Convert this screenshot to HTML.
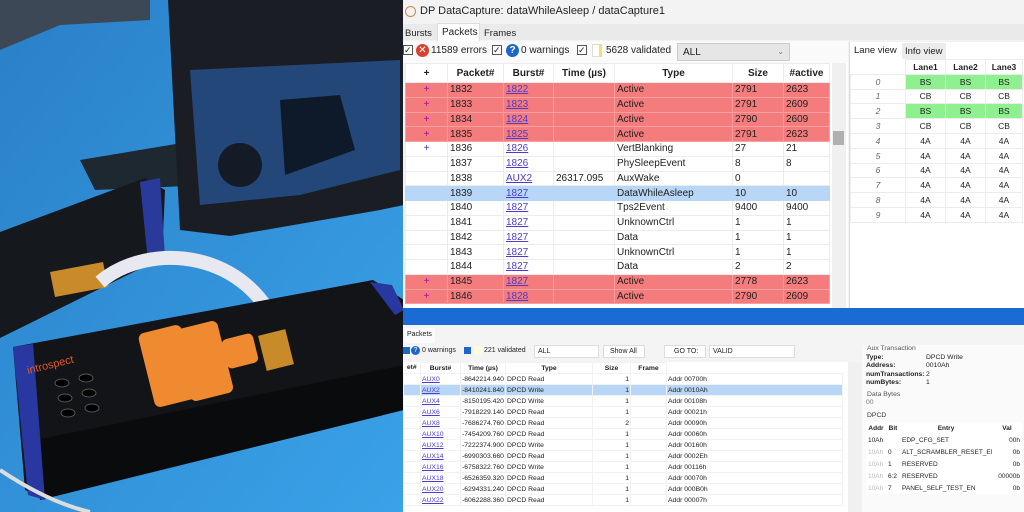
<!DOCTYPE html>
<html><head><meta charset="utf-8"><style>
*{margin:0;padding:0;box-sizing:border-box;white-space:nowrap}
body{width:1024px;height:512px;overflow:hidden;position:relative;background:#fff;font-family:"Liberation Sans",sans-serif;color:#222}
.a{position:absolute}
table{border-collapse:collapse;position:absolute;table-layout:fixed}
td,th{overflow:hidden;white-space:nowrap;border:1px solid #ececec;padding:0 2px}
.t1 td,.t1 th{height:14.75px;font-size:10px}
.t1 th{font-weight:bold;height:19px;font-size:10px}
.r td{background:#f47c7c;border-color:#f8a0a0}
.s td{background:#b8d6f5;border-color:#b8d6f5}
u{color:#4a3ccf}
.t2 td,.t2 th{height:11px;font-size:6.8px;border-color:#f2f2f2;padding:0 1px}
.t3 td,.t3 th{height:14.8px;font-size:8.5px;text-align:center}
.g td.l{background:#8ef08e}
.t3 td.i{font-style:italic;color:#666}
.t4 td,.t4 th{height:12px;font-size:6.5px;border:none}
</style></head><body>
<!-- photo -->
<svg class="a" style="left:0;top:0" width="404" height="512" viewBox="0 0 404 512">
<defs><linearGradient id="bg" x1="0" y1="0" x2="1" y2="1"><stop offset="0" stop-color="#2a80c8"/><stop offset="1" stop-color="#3aa2e8"/></linearGradient></defs>
<rect width="404" height="512" fill="url(#bg)"/>
<path d="M0 0H150V20L60 25L0 50Z" fill="#3c4856"/>
<path d="M80 160L200 140L210 185L95 190Z" fill="#1e2830"/>
<path d="M168 0H404V205L380 210L230 236L180 230Z" fill="#1a1e24"/>
<path d="M190 70L400 60V170L300 195L200 205Z" fill="#24477a"/>
<path d="M280 100L340 95L355 150L285 175Z" fill="#0e1a2a"/>
<circle cx="240" cy="165" r="22" fill="#141a26"/>
<path d="M0 232L145 178L165 190L162 258L0 338Z" fill="#15181c"/>
<path d="M140 182L160 178L165 258L148 262Z" fill="#2a3a9a"/>
<path d="M50 272L103 262L108 287L55 297Z" fill="#c98a2a"/>
<path d="M100 282C150 240 250 250 280 335" stroke="#e8e8f0" stroke-width="14" fill="none"/>
<path d="M13 347L373 280L404 300V392L40 497L25 490Z" fill="#121418"/>
<path d="M35 440L404 365V410L40 500Z" fill="#0a0b0d"/>
<path d="M13 347L33 344L45 500L28 495Z" fill="#2838a0"/>
<path d="M370 282L392 285L404 310L395 315Z" fill="#2838a0"/>
<rect x="146" y="328" width="44" height="76" rx="6" fill="#f08a30" transform="rotate(-14 168 366)"/>
<rect x="182" y="324" width="44" height="74" rx="6" fill="#f08a30" transform="rotate(-14 204 361)"/>
<rect x="224" y="336" width="32" height="30" rx="5" fill="#f08a30" transform="rotate(-14 240 351)"/>
<rect x="262" y="332" width="28" height="36" fill="#c98a2a" transform="rotate(-14 276 350)"/>
<path d="M0 470C30 490 60 505 90 512" stroke="#ddd" stroke-width="4" fill="none"/>
<text x="28" y="374" fill="#e0572a" font-size="11" font-family="Liberation Sans" transform="rotate(-14 28 374)">introspect</text>
<g fill="#000" stroke="#555"><ellipse cx="62" cy="383" rx="7" ry="4"/><ellipse cx="86" cy="378" rx="7" ry="4"/><ellipse cx="65" cy="398" rx="7" ry="4"/><ellipse cx="89" cy="393" rx="7" ry="4"/><ellipse cx="68" cy="413" rx="7" ry="4"/><ellipse cx="92" cy="408" rx="7" ry="4"/></g>
</svg>
<!-- UI -->
<div class="a" style="left:403px;top:0;width:621px;height:512px;background:#f3f3f3"></div>
<div class="a" style="left:405px;top:6px;width:11px;height:11px;border:1.5px solid #c84;border-radius:50%"></div>
<div class="a" style="left:420px;top:5px;font-size:11px">DP DataCapture: dataWhileAsleep / dataCapture1</div>
<div class="a" style="left:403px;top:24px;width:621px;height:16px;background:#eaeaea"></div>
<div class="a" style="left:405px;top:28px;font-size:9.5px">Bursts</div>
<div class="a" style="left:437px;top:23px;width:43px;height:18px;background:#fff;border:1px solid #ddd;border-bottom:none;font-size:10px;padding:3px 4px">Packets</div>
<div class="a" style="left:484px;top:28px;font-size:9.5px">Frames</div>
<div class="a" style="left:403px;top:41px;width:445px;height:22px;background:#fafafa"></div>
<div class="a" style="left:403px;top:45px;width:10px;height:10px;border:1px solid #555;font-size:9px;line-height:8px">✓</div>
<div class="a" style="left:416px;top:44px;width:13px;height:13px;border-radius:50%;background:#d9412f;color:#fff;font-size:10px;text-align:center;line-height:13px">✕</div>
<div class="a" style="left:431px;top:45px;font-size:10px">11589 errors</div>
<div class="a" style="left:492px;top:45px;width:10px;height:10px;border:1px solid #555;font-size:9px;line-height:8px">✓</div>
<div class="a" style="left:506px;top:44px;width:13px;height:13px;border-radius:50%;background:#1e66c8;color:#fff;font-size:10px;text-align:center;line-height:13px;font-weight:bold">?</div>
<div class="a" style="left:521px;top:45px;font-size:10px">0 warnings</div>
<div class="a" style="left:577px;top:45px;width:10px;height:10px;border:1px solid #555;font-size:9px;line-height:8px">✓</div>
<div class="a" style="left:592px;top:44px;width:10px;height:13px;background:#fff;border:1px solid #ddd;border-right:3px solid #f4e070"></div>
<div class="a" style="left:606px;top:45px;font-size:10px">5628 validated</div>
<div class="a" style="left:677px;top:43px;width:113px;height:18px;background:#e6e6e6;border:1px solid #ccc;font-size:10px;padding:3px 5px">ALL<span style="float:right;font-size:8px;color:#777">⌄</span></div>
<div class="a" style="left:405px;top:63px;width:443px;height:245px;background:#fff"></div>
<table class="t1" style="left:405px;top:63px;width:424px">
<col style="width:42px"><col style="width:56px"><col style="width:50px"><col style="width:61px"><col style="width:118px"><col style="width:51px"><col style="width:46px">
<tr><th>+</th><th>Packet#</th><th>Burst#</th><th>Time (µs)</th><th>Type</th><th>Size</th><th>#active</th></tr>
<tr class="r"><td style="text-align:center;color:#a0a">+</td><td>1832</td><td><u>1822</u></td><td></td><td>Active</td><td>2791</td><td>2623</td></tr>
<tr class="r"><td style="text-align:center;color:#a0a">+</td><td>1833</td><td><u>1823</u></td><td></td><td>Active</td><td>2791</td><td>2609</td></tr>
<tr class="r"><td style="text-align:center;color:#a0a">+</td><td>1834</td><td><u>1824</u></td><td></td><td>Active</td><td>2790</td><td>2609</td></tr>
<tr class="r"><td style="text-align:center;color:#a0a">+</td><td>1835</td><td><u>1825</u></td><td></td><td>Active</td><td>2791</td><td>2623</td></tr>
<tr><td style="text-align:center;color:#33a">+</td><td>1836</td><td><u>1826</u></td><td></td><td>VertBlanking</td><td>27</td><td>21</td></tr>
<tr><td></td><td>1837</td><td><u>1826</u></td><td></td><td>PhySleepEvent</td><td>8</td><td>8</td></tr>
<tr><td></td><td>1838</td><td><u>AUX2</u></td><td>26317.095</td><td>AuxWake</td><td>0</td><td></td></tr>
<tr class="s"><td></td><td>1839</td><td><u>1827</u></td><td></td><td>DataWhileAsleep</td><td>10</td><td>10</td></tr>
<tr><td></td><td>1840</td><td><u>1827</u></td><td></td><td>Tps2Event</td><td>9400</td><td>9400</td></tr>
<tr><td></td><td>1841</td><td><u>1827</u></td><td></td><td>UnknownCtrl</td><td>1</td><td>1</td></tr>
<tr><td></td><td>1842</td><td><u>1827</u></td><td></td><td>Data</td><td>1</td><td>1</td></tr>
<tr><td></td><td>1843</td><td><u>1827</u></td><td></td><td>UnknownCtrl</td><td>1</td><td>1</td></tr>
<tr><td></td><td>1844</td><td><u>1827</u></td><td></td><td>Data</td><td>2</td><td>2</td></tr>
<tr class="r"><td style="text-align:center;color:#a0a">+</td><td>1845</td><td><u>1827</u></td><td></td><td>Active</td><td>2778</td><td>2623</td></tr>
<tr class="r"><td style="text-align:center;color:#a0a">+</td><td>1846</td><td><u>1828</u></td><td></td><td>Active</td><td>2790</td><td>2609</td></tr>
</table>
<div class="a" style="left:832px;top:63px;width:14px;height:245px;background:#f0f0f0"></div>
<div class="a" style="left:833px;top:131px;width:11px;height:14px;background:#b0b0b0"></div>
<!-- lane view -->
<div class="a" style="left:849px;top:42px;width:175px;height:266px;background:#fff;border-left:1px solid #ddd"></div>
<div class="a" style="left:851px;top:42px;width:50px;height:17px;font-size:9.5px;padding:3px 3px;background:#fff">Lane view</div>
<div class="a" style="left:902px;top:43px;width:44px;height:16px;font-size:9.5px;padding:3px 3px;background:#ececec">Info view</div>
<table class="t3" style="left:850px;top:59px;width:172px">
<col style="width:55px"><col style="width:40px"><col style="width:40px"><col style="width:37px">
<tr><th style="border:none"></th><th>Lane1</th><th>Lane2</th><th>Lane3</th></tr>
<tr class="g"><td class="i">0</td><td class="l">BS</td><td class="l">BS</td><td class="l">BS</td></tr>
<tr><td class="i">1</td><td>CB</td><td>CB</td><td>CB</td></tr>
<tr class="g"><td class="i">2</td><td class="l">BS</td><td class="l">BS</td><td class="l">BS</td></tr>
<tr><td class="i">3</td><td>CB</td><td>CB</td><td>CB</td></tr>
<tr><td class="i">4</td><td>4A</td><td>4A</td><td>4A</td></tr>
<tr><td class="i">5</td><td>4A</td><td>4A</td><td>4A</td></tr>
<tr><td class="i">6</td><td>4A</td><td>4A</td><td>4A</td></tr>
<tr><td class="i">7</td><td>4A</td><td>4A</td><td>4A</td></tr>
<tr><td class="i">8</td><td>4A</td><td>4A</td><td>4A</td></tr>
<tr><td class="i">9</td><td>4A</td><td>4A</td><td>4A</td></tr>
</table>
<div class="a" style="left:403px;top:308px;width:621px;height:17px;background:#1a6cd4"></div>
<!-- bottom -->
<div class="a" style="left:403px;top:325px;width:621px;height:187px;background:#f4f4f4"></div>
<div class="a" style="left:405px;top:328px;width:30px;height:15px;font-size:7px;padding:3px 2px;background:#fafafa">Packets</div>
<div class="a" style="left:403px;top:347px;width:7px;height:7px;background:#1e66c8"></div>
<div class="a" style="left:411px;top:346px;width:9px;height:9px;border-radius:50%;background:#1e66c8;color:#fff;font-size:7px;text-align:center;line-height:9px">?</div>
<div class="a" style="left:422px;top:347px;font-size:7px">0 warnings</div>
<div class="a" style="left:464px;top:347px;width:7px;height:7px;background:#1e66c8"></div>
<div class="a" style="left:474px;top:346px;width:8px;height:9px;background:#fffbe0"></div>
<div class="a" style="left:484px;top:347px;font-size:7px">221 validated</div>
<div class="a" style="left:534px;top:345px;width:65px;height:13px;background:#fff;border:1px solid #ddd;font-size:7px;padding:2px 3px">ALL</div>
<div class="a" style="left:603px;top:345px;width:42px;height:13px;background:#fff;border:1px solid #ddd;font-size:7px;padding:2px 6px">Show All</div>
<div class="a" style="left:664px;top:345px;width:42px;height:13px;background:#fff;border:1px solid #ddd;font-size:7px;padding:2px 9px">GO TO:</div>
<div class="a" style="left:709px;top:345px;width:86px;height:13px;background:#fff;border:1px solid #ddd;font-size:7px;padding:2px 3px">VALID</div>
<div class="a" style="left:403px;top:362px;width:445px;height:150px;background:#fff"></div>
<table class="t2" style="left:403px;top:362px;width:440px">
<col style="width:17px"><col style="width:40px"><col style="width:45px"><col style="width:87px"><col style="width:38px"><col style="width:36px"><col>
<tr><th style="border:none">et#</th><th>Burst#</th><th>Time (µs)</th><th>Type</th><th>Size</th><th>Frame</th><th style="border:none"></th></tr>
<tr><td></td><td><u>AUX0</u></td><td>-8642214.940</td><td>DPCD Read</td><td style="text-align:right">1</td><td></td><td>Addr 00700h</td></tr>
<tr class="s"><td></td><td><u>AUX2</u></td><td>-8410241.840</td><td>DPCD Write</td><td style="text-align:right">1</td><td></td><td>Addr 0010Ah</td></tr>
<tr><td></td><td><u>AUX4</u></td><td>-8150195.420</td><td>DPCD Write</td><td style="text-align:right">1</td><td></td><td>Addr 00108h</td></tr>
<tr><td></td><td><u>AUX6</u></td><td>-7918229.140</td><td>DPCD Read</td><td style="text-align:right">1</td><td></td><td>Addr 00021h</td></tr>
<tr><td></td><td><u>AUX8</u></td><td>-7686274.760</td><td>DPCD Read</td><td style="text-align:right">2</td><td></td><td>Addr 00090h</td></tr>
<tr><td></td><td><u>AUX10</u></td><td>-7454209.760</td><td>DPCD Read</td><td style="text-align:right">1</td><td></td><td>Addr 00060h</td></tr>
<tr><td></td><td><u>AUX12</u></td><td>-7222374.900</td><td>DPCD Write</td><td style="text-align:right">1</td><td></td><td>Addr 00160h</td></tr>
<tr><td></td><td><u>AUX14</u></td><td>-6990303.660</td><td>DPCD Read</td><td style="text-align:right">1</td><td></td><td>Addr 0002Eh</td></tr>
<tr><td></td><td><u>AUX16</u></td><td>-6758322.760</td><td>DPCD Write</td><td style="text-align:right">1</td><td></td><td>Addr 00116h</td></tr>
<tr><td></td><td><u>AUX18</u></td><td>-6526359.320</td><td>DPCD Read</td><td style="text-align:right">1</td><td></td><td>Addr 00070h</td></tr>
<tr><td></td><td><u>AUX20</u></td><td>-6294331.240</td><td>DPCD Read</td><td style="text-align:right">1</td><td></td><td>Addr 000B0h</td></tr>
<tr><td></td><td><u>AUX22</u></td><td>-6062288.360</td><td>DPCD Read</td><td style="text-align:right">1</td><td></td><td>Addr 00007h</td></tr>
</table>
<div class="a" style="left:848px;top:362px;width:14px;height:150px;background:#f0f0f0"></div>
<div class="a" style="left:862px;top:345px;width:162px;height:167px;background:#fafafa;font-size:6.8px;line-height:8.5px">
<div style="padding:0 5px;color:#555">Aux Transaction</div>
<div style="padding:0 4px"><b style="display:inline-block;width:60px">Type:</b>DPCD Write<br><b style="display:inline-block;width:60px">Address:</b>0010Ah<br><b style="display:inline-block;width:60px">numTransactions:</b>2<br><b style="display:inline-block;width:60px">numBytes:</b>1</div>
<div style="padding:3px 5px 0;color:#555">Data Bytes</div>
<div style="padding:0 4px;color:#777">00</div>
<div style="padding:4px 5px 0;color:#333">DPCD</div>
</div>
<table class="t4" style="left:866px;top:422px;width:156px;background:#fff">
<col style="width:20px"><col style="width:14px"><col style="width:92px"><col>
<tr><th>Addr</th><th>Bit</th><th>Entry</th><th>Val</th></tr>
<tr><td>10Ah</td><td></td><td>EDP_CFG_SET</td><td style="text-align:right">00h</td></tr>
<tr><td style="color:#bbb">10Ah</td><td>0</td><td>ALT_SCRAMBLER_RESET_EN</td><td style="text-align:right">0b</td></tr>
<tr><td style="color:#bbb">10Ah</td><td>1</td><td>RESERVED</td><td style="text-align:right">0b</td></tr>
<tr><td style="color:#bbb">10Ah</td><td>6:2</td><td>RESERVED</td><td style="text-align:right">00000b</td></tr>
<tr><td style="color:#bbb">10Ah</td><td>7</td><td>PANEL_SELF_TEST_EN</td><td style="text-align:right">0b</td></tr>
</table>
</body></html>
